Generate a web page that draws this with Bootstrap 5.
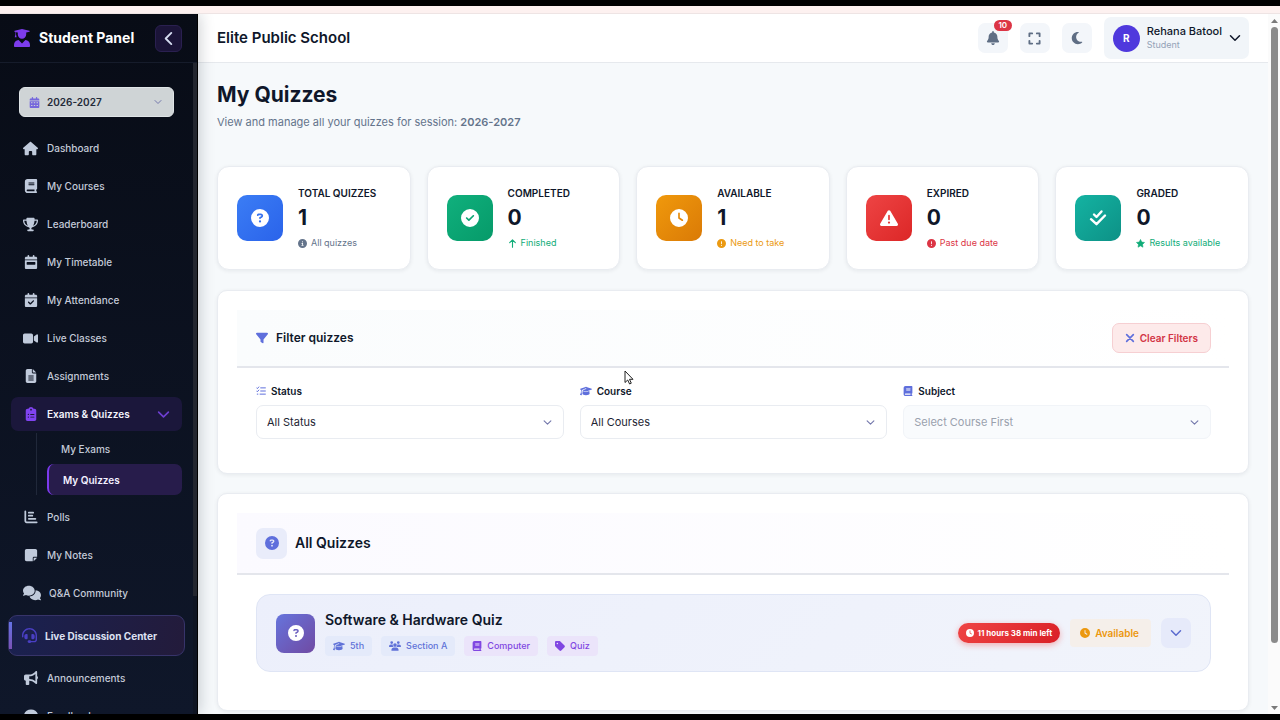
<!DOCTYPE html>
<html lang="en">
<head>
<meta charset="utf-8">
<meta name="viewport" content="width=device-width, initial-scale=1">
<title>Student Panel - My Quizzes</title>
<link href="https://cdn.jsdelivr.net/npm/bootstrap@5.3.0/dist/css/bootstrap.min.css" rel="stylesheet">
<style>
:root { --ink:#0f172a; --indigo:#5f6fdc; --edge:#e9ecf1; }
body { font-family:Inter,"Liberation Sans",sans-serif; font-size:11px; line-height:16px; color:var(--ink); background:#000; }
.ico { width:1em; height:1em; fill:currentColor; fill-rule:evenodd; flex:none; display:block; }
.fs-10 { font-size:10px; } .fs-12 { font-size:12px; } .fs-13 { font-size:13px; } .fs-14 { font-size:14px; } .fs-15 { font-size:15px; }

.frame-bar { height:6px; flex:none; }
.browser-strip { height:8px; flex:none; background:#fdf1f0; border-bottom:1px solid #eee4e4; }

.side-panel { width:198px; flex:none; font-size:10px; color:#c3cad8; background:linear-gradient(#080c16,#0f172a); border-right:1px solid #000; box-shadow:2px 0 14px rgba(15,23,42,.2); z-index:2; }
.brand-row { height:49px; flex:none; padding:0 15px 0 13px; border-bottom:1px solid #161c2b; font-size:14px; }
.brand-mark { color:#7d3cec; font-size:18px; }
.collapse-btn { width:27px; height:27px; border-radius:6px; background:#1b1438; border:1px solid #2a2050; color:#d5dcf0; }
.side-track { width:4px; flex:none; background:#0e1422; }
.side-thumb { height:533px; background:#23262f; }
.side-body { padding:24px 11px 0; }
.session-pick { height:30px; border-radius:6px; margin:0 8px; padding:0 9px; background:#cfd4d6; border:1px solid #dfe4e6; }
.session-pick label { color:#7568dc; font-size:11px; }
.session-pick select { font-size:10px; font-weight:600; line-height:16px; color:#232a39; padding:0 18px 0 7px; background-color:transparent; background-position:right 2px center; background-size:8px 8px; }
.side-list { margin-top:14px; }
.side-link { height:34px; margin-bottom:4px; padding:0 12px 0 11px; gap:8px; border-radius:7px; color:#c3cad8; font-weight:500; text-decoration:none; display:flex; align-items:center; }
.side-link .glyph { width:17px; display:flex; justify-content:center; font-size:14px; color:#c0cadb; }
.side-link .glyph-wide { width:19px; font-size:18px; }
.side-link.open { background:#1b173b; color:#f3f4fb; font-weight:600; }
.side-link.open .glyph { color:#8043f0; }
.open-caret { color:#6d3fd0; font-size:13px; }
.sub-list { margin:-2px 0 5px 25px; border-left:1px solid #20283a; padding-left:10px; }
.sub-list a { height:31px; display:flex; align-items:center; padding-left:14px; border-radius:7px; color:#c3cad8; font-weight:500; text-decoration:none; }
.sub-list a.current { color:#f3f0ff; font-weight:600; background:#271c4b; border-left:2px solid #7c3aed; }
.live-link { height:41px; margin:5px -3px 5px; padding:0 13px; gap:8px; border:1px solid #37346a; border-radius:9px; background:linear-gradient(100deg,#1a2150,#231b3b); color:#dde1f2; font-weight:700; text-decoration:none; display:flex; align-items:center; position:relative; }
.live-link::before { content:""; position:absolute; left:0; top:6px; bottom:6px; width:3px; background:linear-gradient(#6473e6,#7b52b5); }
.live-link .ico { color:#4a3fc4; font-size:15px; }

.page-area { background:#f6f9fb; }
.top-bar { height:49px; flex:none; background:#fff; border-bottom:1px solid #e6e9ed; padding:0 19px; }
.tool-set { gap:12px; }
.tool-btn { width:30px; height:30px; border:0; border-radius:7px; background:#f3f6fa; color:#5f6e84; position:relative; font-size:14px; }
.count-pill { position:absolute; top:-3px; left:16px; width:18px; height:11px; border-radius:6px; background:#dc3545; color:#fff; font-size:8px; line-height:11px; font-weight:600; }
.user-btn { height:42px; padding:0 8px 0 9px; gap:7px; border:0; border-radius:7px; background:#f1f5f9; color:var(--ink); line-height:14px; }
.user-dot { width:27px; height:27px; border-radius:50%; background:#4f39dd; color:#fff; font-size:10px; font-weight:700; }
.user-role { font-size:9px; color:#94a3b8; }

.content { padding:19px; }
.page-title { font-size:21px; line-height:26px; font-weight:700; }
.page-sub { color:#64748b; margin-top:6px; }
.panel { background:#fff; border:1px solid var(--edge); border-radius:10px; box-shadow:0 1px 4px rgba(15,23,42,.07); }
.stats { margin-top:36px; }
.stat { height:104px; padding:0 19px; gap:15px; border-radius:12px; }
.tile { width:46px; height:46px; border-radius:10px; color:#fff; font-size:18px; flex:none; }
.t-blue { background:linear-gradient(135deg,#3b7df5,#2a63ea); } .t-green { background:linear-gradient(135deg,#10b07d,#069a69); }
.t-amber { background:linear-gradient(135deg,#f0990c,#da7a06); } .t-red { background:linear-gradient(135deg,#ee4444,#dc2727); } .t-teal { background:linear-gradient(135deg,#14b3a2,#0d9186); }
.stat-name { font-size:10px; font-weight:600; line-height:14px; }
.stat-num { font-size:21px; font-weight:700; line-height:28px; margin:4px 0; }
.stat-note { font-size:9px; line-height:14px; gap:4px; white-space:nowrap; }
.stat-note .ico { font-size:9px; }
.c-green { color:#10ac78; } .c-amber { color:#eb9a12; } .c-red { color:#dc3545; } .c-grey { color:#64748b; } .c-indigo { color:var(--indigo); }

.block { margin-top:19px; padding:19px 19px 18px; }
.stats + .block { margin-top:20px; }
.block-head { padding:0 18px 0 19px; border-bottom:2px solid #e4e6ec; }
.head-filter { height:58px; background:linear-gradient(90deg,#fafcfd,#fff); }
.head-list { height:62px; background:linear-gradient(90deg,#fbfaff,#fff); }
.clear-btn { height:30px; padding:0 12px; gap:5px; border:1px solid #f6cfd2; border-radius:7px; background:#fdeaea; color:#d23445; font-size:10px; font-weight:600; }
.block-body { padding:15px 18px 16px 19px; }
.list-body { padding:19px 18px 20px 19px; }
.field-label { gap:5px; font-size:10px; font-weight:600; margin-bottom:6px; line-height:16px; }
.form-select { background-image:url("data:image/svg+xml,%3Csvg xmlns='http://www.w3.org/2000/svg' viewBox='0 0 16 16'%3E%3Cpath fill='none' stroke='%237478ac' stroke-width='2' stroke-linecap='round' stroke-linejoin='round' d='m2 5 6 6 6-6'/%3E%3C/svg%3E"); }
.picker { height:34px; font-size:11px; line-height:16px; padding:0 32px 0 10px; color:#1e2533; border:1px solid var(--edge); border-radius:7px; background-size:9px 9px; background-position:right 11px center; }
.picker:disabled { background-color:#f9fbfd; color:#9aa1ad; border-color:#f1f4f8; opacity:1; }

.head-icon { width:31px; height:31px; border-radius:7px; background:#e9ecfa; font-size:14px; }
.quiz-row { height:78px; padding:0 19px; gap:10px; border:1px solid #dfe5f5; border-radius:14px; background:linear-gradient(135deg,#eceffb,#f1f4fb); }
.quiz-tile { width:39px; height:39px; border-radius:8px; color:#fff; font-size:16px; background:linear-gradient(135deg,#6674dc,#704aa3); flex:none; }
.quiz-name { font-size:14px; font-weight:600; line-height:18px; margin-bottom:7px; }
.chips { gap:9px; }
.chip { height:20px; padding:0 8px; gap:5px; border-radius:4px; background:#e4eafa; color:#6072d8; font-size:9px; font-weight:500; }
.chip .ico { font-size:10px; }
.chip .ico-wide { font-size:12px; }
.chip-violet { background:#ebe4fa; color:#8147e2; }
.time-pill { height:20px; padding:0 8px; gap:3px; border-radius:10px; color:#fff; font-size:8px; font-weight:700; background:linear-gradient(135deg,#ef4444,#d91f26); box-shadow:0 2px 6px rgba(239,68,68,.4); }
.state-chip { height:28px; padding:0 12px 0 10px; gap:5px; border-radius:4px; background:#f5efea; color:#ec980f; font-size:10px; font-weight:600; }
.more-btn { width:30px; height:30px; border:0; border-radius:7px; background:#e6eafa; color:#5b6bcf; }

.scroll-rail { width:12px; flex:none; background:#fbfbfb; padding-top:5px; }
.scroll-thumb { width:7px; height:616px; border-radius:4px; background:#8b8b8b; margin-top:4px; }
.pointer { position:absolute; left:624px; top:370px; width:10px; height:15px; z-index:5; }
</style>
</head>
<body class="vh-100 overflow-hidden d-flex flex-column">

<svg class="d-none" xmlns="http://www.w3.org/2000/svg">
  <symbol id="i-house" viewBox="0 0 576 512"><path d="M575.8 255.5c0 18-15 32.1-32 32.1h-32l.7 160.2V472c0 22.1-17.9 40-40 40H392c-22.1 0-40-17.9-40-40V384c0-17.7-14.3-32-32-32H256c-17.7 0-32 14.3-32 32v88c0 22.1-17.9 40-40 40H104c-22.1 0-40-17.9-40-40V287.6H32c-18 0-32-14-32-32.1c0-9 3-17 10-24L266.4 8c7-7 15-8 22-8s15 2 21 7L564.8 231.5c8 7 12 15 11 24z"/></symbol>
  <symbol id="i-book" viewBox="0 0 448 512"><path d="M96 0C43 0 0 43 0 96V416c0 53 43 96 96 96H384h32c17.700 0 32-14.300 32-32s-14.300-32-32-32V384c17.700 0 32-14.300 32-32V32c0-17.700-14.300-32-32-32H384 96zm0 384H352v64H96c-17.700 0-32-14.300-32-32s14.300-32 32-32zm32-240c0-8.800 7.200-16 16-16H336c8.800 0 16 7.200 16 16s-7.200 16-16 16H144c-8.800 0-16-7.200-16-16zm16 48H336c8.800 0 16 7.200 16 16s-7.200 16-16 16H144c-8.800 0-16-7.200-16-16s7.200-16 16-16z"/></symbol>
  <symbol id="i-trophy" viewBox="0 0 576 512"><path d="M400 0H176c-26.500 0-48.100 21.800-47.100 48.200c.2 5.300 .4 10.600 .7 15.800H24C10.700 64 0 74.700 0 88c0 92.600 33.500 157 78.500 200.700c44.300 43.100 98.300 64.800 138.100 75.800c23.400 6.500 39.400 26 39.400 45.600c0 20.900-17 37.900-37.900 37.900H192c-17.700 0-32 14.300-32 32s14.300 32 32 32H384c17.700 0 32-14.300 32-32s-14.300-32-32-32H357.900C337 448 320 431 320 410.100c0-19.600 15.900-39.200 39.400-45.600c39.900-11 93.900-32.700 138.200-75.800C542.500 245 576 180.600 576 88c0-13.300-10.700-24-24-24H446.400c.3-5.200 .5-10.400 .7-15.800C448.100 21.800 426.500 0 400 0zM48.900 112h84.400c9.100 90.100 29.200 150.300 51.900 190.600c-24.900-11-50.800-26.500-73.200-48.300c-32-31.100-58-76-63-142.300zM464.100 254.300c-22.400 21.800-48.300 37.300-73.200 48.300c22.700-40.300 42.800-100.500 51.900-190.600h84.400c-5.100 66.300-31.100 111.200-63 142.300z"/></symbol>
  <symbol id="i-cal" viewBox="0 0 448 512"><path d="M128 0c17.700 0 32 14.300 32 32V64H288V32c0-17.700 14.300-32 32-32s32 14.300 32 32V64h48c26.500 0 48 21.500 48 48v48H0V112C0 85.500 21.500 64 48 64H96V32c0-17.700 14.300-32 32-32zM0 192H448V464c0 26.500-21.500 48-48 48H48c-26.500 0-48-21.500-48-48V192zM80 256c-8.800 0-16 7.200-16 16v64c0 8.800 7.200 16 16 16H368c8.800 0 16-7.200 16-16V272c0-8.800-7.200-16-16-16H80z"/></symbol>
  <symbol id="i-calcheck" viewBox="0 0 448 512"><path d="M128 0c17.700 0 32 14.300 32 32V64H288V32c0-17.700 14.300-32 32-32s32 14.300 32 32V64h48c26.500 0 48 21.500 48 48v48H0V112C0 85.500 21.500 64 48 64H96V32c0-17.700 14.300-32 32-32zM0 192H448V464c0 26.500-21.500 48-48 48H48c-26.500 0-48-21.500-48-48V192zM329 305c9.400-9.400 9.400-24.600 0-33.900s-24.600-9.400-33.900 0l-95 95-47-47c-9.400-9.400-24.600-9.400-33.900 0s-9.400 24.600 0 33.900l64 64c9.400 9.400 24.600 9.400 33.900 0L329 305z"/></symbol>
  <symbol id="i-calgrid" viewBox="0 0 448 512"><path d="M128 0c17.700 0 32 14.300 32 32V64H288V32c0-17.700 14.300-32 32-32s32 14.300 32 32V64h48c26.500 0 48 21.500 48 48v48H0V112C0 85.500 21.500 64 48 64H96V32c0-17.700 14.300-32 32-32zM0 192H448V464c0 26.500-21.500 48-48 48H48c-26.500 0-48-21.500-48-48V192zM64 240v48h64v-48zM192 240v48h64v-48zM320 240v48h64v-48zM64 368v48h64v-48zM192 368v48h64v-48zM320 368v48h64v-48z"/></symbol>
  <symbol id="i-video" viewBox="0 0 576 512"><path d="M0 128C0 92.700 28.700 64 64 64H320c35.300 0 64 28.700 64 64V384c0 35.300-28.700 64-64 64H64c-35.300 0-64-28.700-64-64V128zM559 99.800c10.400 5.600 17 16.400 17 28.200V384c0 11.800-6.500 22.600-17 28.200s-23 5-33-1.600l-96-64L416 337V175l14-9.500 96-64c9.800-6.500 22.400-7.200 33-1.700z"/></symbol>
  <symbol id="i-file" viewBox="0 0 384 512"><path d="M64 0C28.700 0 0 28.700 0 64V448c0 35.300 28.700 64 64 64H320c35.300 0 64-28.700 64-64V160H256c-17.700 0-32-14.300-32-32V0H64zM256 0V128H384L256 0zM96 240h192v32H96zM96 312h192v32H96zM96 384h192v32H96z"/></symbol>
  <symbol id="i-clip" viewBox="0 0 384 512"><path d="M192 0c-41.800 0-77.400 26.700-90.500 64H64C28.700 64 0 92.700 0 128V448c0 35.300 28.700 64 64 64H320c35.300 0 64-28.700 64-64V128c0-35.300-28.700-64-64-64H282.500C269.400 26.700 233.800 0 192 0zm0 64a32 32 0 1 1 0 64 32 32 0 1 1 0-64zM72 272a24 24 0 1 1 48 0 24 24 0 1 1 -48 0zm104-16H304c8.800 0 16 7.200 16 16s-7.200 16-16 16H176c-8.800 0-16-7.200-16-16s7.200-16 16-16zM72 368a24 24 0 1 1 48 0 24 24 0 1 1 -48 0zm88 0c0-8.800 7.200-16 16-16H304c8.800 0 16 7.200 16 16s-7.200 16-16 16H176c-8.800 0-16-7.200-16-16z"/></symbol>
  <symbol id="i-poll" viewBox="0 0 16 16"><path fill="none" stroke="currentColor" stroke-width="2" stroke-linecap="round" stroke-linejoin="round" d="M1.500 1.500v11a1.500 1.500 0 0 0 1.500 1.500h11.500M5.500 3h5M5.500 6.500h4M5.500 10h7.500"/></symbol>
  <symbol id="i-note" viewBox="0 0 448 512"><path d="M64 32C28.700 32 0 60.700 0 96V416c0 35.300 28.700 64 64 64H288V368c0-26.500 21.500-48 48-48H448V96c0-35.300-28.700-64-64-64H64zM448 352H336c-8.800 0-16 7.200-16 16V480z"/></symbol>
  <symbol id="i-chat" viewBox="0 0 640 512"><path d="M208 352c115 0 208-79 208-176S323 0 208 0S0 79 0 176c0 38.600 14.700 74.300 39.600 103.400c-3.500 9.400-8.700 17.700-14.200 24.700c-7 9-14 15-19 19C1 327-1.400 334.400 .8 341S9 352 16 352c21.800 0 43.800-5.600 62-12.500c9.200-3.500 17.800-7.400 25.200-11.400C134 343 170 352 208 352zM448 176c0 112.300-99 197-216.500 207C255.800 457.400 336.400 512 432 512c38.200 0 74-8.700 104.700-24c7.500 4 16 8 25.200 11.400c18.300 7 40.300 12.500 62 12.500c7 0 13-4.500 15.200-11s-.2-13.800-5.800-18c-5-4-12-10-19-19c-5.500-7-10.700-15.400-14.200-24.700c25-29 39.600-64.700 39.600-103.400c0-92.800-85-169-192.600-175.500c.4 5 .6 10.300 .6 15.500z"/></symbol>
  <symbol id="i-comment" viewBox="0 0 16 16"><path d="M8 0.500c4.400 0 8 3 8 6.800s-3.600 6.800-8 6.800c-1.200 0-2.300-.2-3.300-.6L1 15.500c-.5.200-.9-.3-.7-.7l1.300-3.300C.6 10.400 0 8.900 0 7.300 0 3.500 3.600.5 8 .5z"/></symbol>
  <symbol id="i-headset" viewBox="0 0 512 512"><path d="M256 48C141 48 48 141 48 256v40c0 13.300-10.700 24-24 24s-24-10.700-24-24V256C0 114.600 114.600 0 256 0S512 114.600 512 256V400c0 48.600-39.400 88-88 88H313.600c-8.300 14.300-23.800 24-41.600 24H240c-26.500 0-48-21.500-48-48s21.500-48 48-48h32c17.800 0 33.300 9.700 41.600 24H424c22 0 40-18 40-40V256c0-115-93-208-208-208zM144 208h16c17.700 0 32 14.300 32 32V352c0 17.700-14.300 32-32 32H144c-35.300 0-64-28.700-64-64V272c0-35.300 28.700-64 64-64zm224 0c35.300 0 64 28.700 64 64v48c0 35.300-28.700 64-64 64H352c-17.700 0-32-14.300-32-32V240c0-17.700 14.300-32 32-32h16z"/></symbol>
  <symbol id="i-horn" viewBox="0 0 512 512"><path d="M480 32c0-12.900-7.800-24.600-19.800-29.600s-25.700-2.200-34.900 6.900L381.700 53c-48 48-113.100 75-181 75H64c-35.300 0-64 28.700-64 64v96c0 35.300 28.700 64 64 64V480c0 17.700 14.300 32 32 32h64c17.700 0 32-14.300 32-32V352h8.700c67.900 0 133 27 181 75l43.600 43.600c9.200 9.200 22.900 11.900 34.900 6.900s19.800-16.600 19.800-29.600V300.400c18.600-8.800 32-32.500 32-60.400s-13.400-51.600-32-60.400V32zm-64 76.700V371.300C357.200 317.800 280.500 288 200.700 288H192V192h8.700c79.800 0 156.500-29.800 215.300-83.300z"/></symbol>
  <symbol id="i-cap" viewBox="0 0 640 512"><path d="M320 32c-8 0-16 1.400-23.700 4L15.800 137.400C6.300 141 0 150 0 160s6.300 19 15.800 22.600l58 21C57.300 229.300 48 260 48 292v28c0 28.400-10.800 57.700-22.300 80.800c-6.500 13-14 25.800-22.500 37.600C0 442.700-1 448.300 1 453.400s6 9 11 10.200l64 16c4.200 1 8.700 .3 12.400-2s6.300-6 7-10.400c8.600-42.800 4.300-81.200-2-108.700C90.300 344.300 86 330 80 316.500V292c0-30.200 10.200-58.700 28-81.500c13-15.500 29.600-28 49.200-35.700l157-61.700c8.200-3.200 17.500 .8 20.700 9s-.8 17.500-9 20.700l-157 61.700c-12.400 5-23.300 12.400-32.200 21.600l159.600 57.600c7.600 2.700 15.600 4 23.700 4s16-1.400 23.700-4L624.200 182.600c9.500-3.400 15.800-12.500 15.800-22.600s-6.300-19-15.800-22.600L343.700 36C336 33.400 328 32 320 32zM128 408c0 35.300 86 72 192 72s192-36.700 192-72L496.700 262.600 354.500 314c-11 4-22.800 6-34.500 6s-23.500-2-34.500-6L143.300 262.600 128 408z"/></symbol>
  <symbol id="i-grad" viewBox="0 0 16 18"><path d="M8 0 .6 1.800C.1 2 .1 2.600.6 2.700L1.500 3v2.200L.7 8.200h1.900L2 5.200V3.200l1.800.4v1.900a4.200 4.200 0 0 0 8.400 0V3.600l3.200-.9c.5-.1.500-.7 0-.9zM4.600 11C1.900 11.200 0 13.300 0 16v1.200c0 .5.300.8.800.8h14.400c.5 0 .8-.3.800-.8V16c0-2.700-1.900-4.800-4.600-5L8 14.500z"/></symbol>
  <symbol id="i-bell" viewBox="0 0 448 512"><path d="M224 0c-17.700 0-32 14.300-32 32V51.200C119 66 64 130.600 64 208v18.800c0 47-17.300 92.400-48.500 127.600l-7.400 8.300c-8.400 9.400-10.400 22.900-5.300 34.400S19.400 416 32 416H416c12.600 0 24-7.400 29.200-18.900s3.100-25-5.300-34.400l-7.400-8.300C401.300 319.200 384 273.900 384 226.800V208c0-77.400-55-142-128-156.800V32c0-17.700-14.300-32-32-32zm45.300 493.300c12-12 18.700-28.300 18.700-45.300H160c0 17 6.700 33.300 18.700 45.300s28.300 18.700 45.300 18.700s33.300-6.700 45.300-18.700z"/></symbol>
  <symbol id="i-expand" viewBox="0 0 14 14"><path fill="none" stroke="currentColor" stroke-width="2" stroke-linecap="round" stroke-linejoin="round" d="M1.500 4.500v-3h3M9.500 1.500h3v3M12.500 9.500v3h-3M4.500 12.500h-3v-3"/></symbol>
  <symbol id="i-moon" viewBox="0 0 384 512"><path d="M223.500 32C100 32 0 132.300 0 256S100 480 223.500 480c60.600 0 115.500-24.200 155.800-63.400c5-4.900 6.300-12.500 3.100-18.700s-10.100-9.700-17-8.500c-9.800 1.700-19.800 2.600-30.100 2.600c-96.900 0-175.500-78.800-175.500-176c0-65.800 36-123.100 89.300-153.300c6.100-3.500 9.200-10.500 7.700-17.300s-7.300-11.900-14.300-12.500c-6.300-.5-12.600-.8-19-.8z"/></symbol>
  <symbol id="i-filter" viewBox="0 0 512 512"><path d="M4 55C10.500 41 24.500 32 40 32H472c15.500 0 29.500 9 36 23s4.600 30.500-5.200 42.500L320 321V448c0 12-6.800 23.200-17.700 28.600s-23.800 4.300-33.500-3l-64-48c-8-6-12.800-15.500-12.800-25.600V321L9 97.300C-.7 85.400-2.800 68.800 4 55z"/></symbol>
  <symbol id="i-check" viewBox="0 0 512 512"><path d="M256 512A256 256 0 1 0 256 0a256 256 0 1 0 0 512zM369 209L241 337c-9.400 9.400-24.600 9.400-33.900 0l-64-64c-9.400-9.400-9.400-24.600 0-33.900s24.600-9.400 33.900 0l47 47L335 175c9.400-9.400 24.600-9.400 33.900 0s9.400 24.600 0 33.900z"/></symbol>
  <symbol id="i-ask" viewBox="0 0 512 512"><path d="M256 512A256 256 0 1 0 256 0a256 256 0 1 0 0 512zM169.800 165.300c7.900-22.300 29.100-37.300 52.800-37.300h58.300c34.900 0 63.100 28.300 63.100 63.100c0 22.600-12.100 43.500-31.700 54.800L280 264.400c-.2 13-10.900 23.600-24 23.600c-13.300 0-24-10.700-24-24V250.500c0-8.600 4.600-16.500 12.100-20.800l44.300-25.400c4.700-2.700 7.600-7.700 7.600-13.100c0-8.400-6.800-15.100-15.100-15.100H222.600c-3.400 0-6.400 2.100-7.500 5.300l-.4 1.200c-4.400 12.500-18.200 19-30.600 14.600s-19-18.200-14.600-30.600l.4-1.200zM224 352a32 32 0 1 1 64 0 32 32 0 1 1 -64 0z"/></symbol>
  <symbol id="i-info" viewBox="0 0 512 512"><path d="M256 512A256 256 0 1 0 256 0a256 256 0 1 0 0 512zM216 336h24V272H216c-13.300 0-24-10.700-24-24s10.700-24 24-24h48c13.300 0 24 10.700 24 24v88h8c13.300 0 24 10.700 24 24s-10.700 24-24 24H216c-13.300 0-24-10.700-24-24s10.700-24 24-24zm40-208a32 32 0 1 1 0 64 32 32 0 1 1 0-64z"/></symbol>
  <symbol id="i-clock" viewBox="0 0 512 512"><path d="M256 0a256 256 0 1 1 0 512A256 256 0 1 1 256 0zM232 120V256c0 8 4 15.500 10.700 20l96 64c11 7.400 25.900 4.400 33.300-6.700s4.400-25.900-6.700-33.300L280 243.200V120c0-13.300-10.700-24-24-24s-24 10.700-24 24z"/></symbol>
  <symbol id="i-bang" viewBox="0 0 512 512"><path d="M256 512A256 256 0 1 0 256 0a256 256 0 1 0 0 512zM256 128c-13.300 0-24 10.700-24 24V264c0 13.300 10.700 24 24 24s24-10.700 24-24V152c0-13.300-10.700-24-24-24zm32 224a32 32 0 1 0 -64 0 32 32 0 1 0 64 0z"/></symbol>
  <symbol id="i-warn" viewBox="0 0 512 512"><path d="M256 32c14.200 0 27.300 7.500 34.500 19.800l216 368c7.300 12.400 7.300 27.700 .2 40.100S486.300 480 472 480H40c-14.300 0-27.600-7.700-34.700-20.100s-7-27.800 .2-40.100l216-368C228.700 39.500 241.800 32 256 32zm0 128c-13.300 0-24 10.700-24 24V296c0 13.300 10.700 24 24 24s24-10.700 24-24V184c0-13.300-10.700-24-24-24zm32 224a32 32 0 1 0 -64 0 32 32 0 1 0 64 0z"/></symbol>
  <symbol id="i-double" viewBox="0 0 18 18"><path fill="none" stroke="currentColor" stroke-width="2.400" stroke-linecap="round" stroke-linejoin="round" d="M5 5.500 7.500 8l5-5.500M2 10.200l5.500 5 8.500-8.700"/></symbol>
  <symbol id="i-star" viewBox="0 0 16 16"><path stroke="currentColor" stroke-linejoin="round" d="m8 .8 2.200 4.600 5 .7-3.600 3.500.8 5L8 12.200l-4.400 2.400.8-5L.8 6.100l5-.7z"/></symbol>
  <symbol id="i-up" viewBox="0 0 14 16"><path fill="none" stroke="currentColor" stroke-width="2" stroke-linecap="round" stroke-linejoin="round" d="M7 14.500v-13M2 6.500l5-5 5 5"/></symbol>
  <symbol id="i-tasks" viewBox="0 0 16 16"><path fill="none" stroke="currentColor" stroke-width="1.600" stroke-linecap="round" stroke-linejoin="round" d="M1 3l1.200 1.200L4.500 1.500M1 8l1.200 1.200 2.300-2.700M7.500 3H15M7.500 8H15M6.500 13H15M2 13h1"/></symbol>
  <symbol id="i-users" viewBox="0 0 20 16"><path d="M4.500 0a2.300 2.300 0 1 1 0 4.600 2.300 2.300 0 0 1 0-4.600zM15.500 0a2.300 2.300 0 1 1 0 4.600 2.300 2.300 0 0 1 0-4.600zM10 3.500a3 3 0 1 1 0 6 3 3 0 0 1 0-6zM0 9c0-2 1.300-3.500 3.300-3.500H5c.5 0 .9.100 1.200.2-.2 1.500.3 2.900 1.400 3.900H.6C.2 9.600 0 9.400 0 9zM20 9c0-2-1.300-3.500-3.300-3.500H15c-.5 0-.9.100-1.200.2.200 1.500-.3 2.900-1.400 3.900h7c.4 0 .6-.2.600-.6zM4 15c0-2.500 1.700-4.300 4.200-4.300h3.600c2.500 0 4.200 1.800 4.200 4.300 0 .6-.3 1-.9 1H4.900c-.6 0-.9-.4-.9-1z"/></symbol>
  <symbol id="i-tag" viewBox="0 0 16 16"><path d="M0 2v5.200c0 .5.200 1 .6 1.400l6.600 6.600c.8.800 2 .8 2.800 0l5.200-5.200c.8-.8.800-2 0-2.800L8.600.6C8.200.2 7.700 0 7.200 0H2C.9 0 0 .9 0 2zm3.800.7a1.200 1.200 0 1 1 0 2.400 1.200 1.200 0 0 1 0-2.400z"/></symbol>
  <symbol id="i-down" viewBox="0 0 16 16"><path fill="none" stroke="currentColor" stroke-width="2" stroke-linecap="round" stroke-linejoin="round" d="m2 5 6 6 6-6"/></symbol>
  <symbol id="i-left" viewBox="0 0 16 16"><path fill="none" stroke="currentColor" stroke-width="2" stroke-linecap="round" stroke-linejoin="round" d="m11 2-6 6 6 6"/></symbol>
  <symbol id="i-x" viewBox="0 0 12 12"><path fill="none" stroke="currentColor" stroke-width="2" stroke-linecap="round" d="m2 2 8 8M10 2l-8 8"/></symbol>
</svg>

<div class="frame-bar"></div>
<div class="browser-strip"></div>

<div class="d-flex flex-grow-1 overflow-hidden">
  <aside class="side-panel d-flex flex-column">
    <div class="brand-row d-flex align-items-center">
      <svg class="ico brand-mark"><use href="#i-grad"/></svg>
      <span class="text-white fw-bold ms-2 flex-grow-1 text-nowrap">Student Panel</span>
      <button class="collapse-btn p-0 d-flex align-items-center justify-content-center" type="button" aria-label="Collapse menu"><svg class="ico fs-15"><use href="#i-left"/></svg></button>
    </div>
    <div class="d-flex flex-grow-1 overflow-hidden">
      <div class="side-body flex-grow-1">
        <div class="session-pick d-flex align-items-center">
          <label for="session" aria-label="Session"><svg class="ico"><use href="#i-calgrid"/></svg></label>
          <select id="session" class="form-select border-0 shadow-none"><option>2026-2027</option></select>
        </div>
        <nav class="side-list">
          <a class="side-link" href="#"><span class="glyph"><svg class="ico fs-15"><use href="#i-house"/></svg></span>Dashboard</a>
          <a class="side-link" href="#"><span class="glyph"><svg class="ico"><use href="#i-book"/></svg></span>My Courses</a>
          <a class="side-link" href="#"><span class="glyph"><svg class="ico fs-15"><use href="#i-trophy"/></svg></span>Leaderboard</a>
          <a class="side-link" href="#"><span class="glyph"><svg class="ico"><use href="#i-cal"/></svg></span>My Timetable</a>
          <a class="side-link" href="#"><span class="glyph"><svg class="ico"><use href="#i-calcheck"/></svg></span>My Attendance</a>
          <a class="side-link" href="#"><span class="glyph"><svg class="ico fs-15"><use href="#i-video"/></svg></span>Live Classes</a>
          <a class="side-link" href="#"><span class="glyph"><svg class="ico"><use href="#i-file"/></svg></span>Assignments</a>
          <a class="side-link open" href="#"><span class="glyph"><svg class="ico"><use href="#i-clip"/></svg></span>Exams &amp; Quizzes<svg class="ico ms-auto open-caret"><use href="#i-down"/></svg></a>
          <div class="sub-list">
            <a href="#">My Exams</a>
            <a class="current" href="#">My Quizzes</a>
          </div>
          <a class="side-link" href="#"><span class="glyph"><svg class="ico"><use href="#i-poll"/></svg></span>Polls</a>
          <a class="side-link" href="#"><span class="glyph"><svg class="ico"><use href="#i-note"/></svg></span>My Notes</a>
          <a class="side-link" href="#"><span class="glyph glyph-wide"><svg class="ico"><use href="#i-chat"/></svg></span>Q&amp;A Community</a>
          <a class="live-link" href="#"><svg class="ico"><use href="#i-headset"/></svg>Live Discussion Center</a>
          <a class="side-link" href="#"><span class="glyph"><svg class="ico"><use href="#i-horn"/></svg></span>Announcements</a>
          <a class="side-link" href="#"><span class="glyph"><svg class="ico"><use href="#i-comment"/></svg></span>Feedback</a>
        </nav>
      </div>
      <div class="side-track"><div class="side-thumb"></div></div>
    </div>
  </aside>

  <div class="page-area flex-grow-1 overflow-hidden d-flex flex-column">
    <header class="top-bar d-flex align-items-center">
      <span class="fs-15 fw-semibold flex-grow-1">Elite Public School</span>
      <div class="tool-set d-flex align-items-center">
        <button class="tool-btn d-flex align-items-center justify-content-center" type="button" aria-label="Notifications"><svg class="ico"><use href="#i-bell"/></svg><span class="count-pill">10</span></button>
        <button class="tool-btn d-flex align-items-center justify-content-center" type="button" aria-label="Full screen"><svg class="ico fs-13"><use href="#i-expand"/></svg></button>
        <button class="tool-btn d-flex align-items-center justify-content-center" type="button" aria-label="Dark mode"><svg class="ico"><use href="#i-moon"/></svg></button>
        <button class="user-btn d-flex align-items-center text-start" type="button">
          <span class="user-dot d-flex align-items-center justify-content-center">R</span>
          <span><span class="d-block fw-medium">Rehana Batool</span><span class="d-block user-role">Student</span></span>
          <svg class="ico fs-12"><use href="#i-down"/></svg>
        </button>
      </div>
    </header>

    <main class="content">
      <h1 class="page-title mb-0">My Quizzes</h1>
      <p class="page-sub mb-0">View and manage all your quizzes for session: <b class="fw-semibold">2026-2027</b></p>

      <div class="stats row row-cols-5 gx-3">
        <div class="col"><div class="panel stat d-flex align-items-center"><div class="tile t-blue d-flex align-items-center justify-content-center"><svg class="ico"><use href="#i-ask"/></svg></div><div><div class="stat-name">TOTAL QUIZZES</div><div class="stat-num">1</div><div class="stat-note c-grey d-flex align-items-center"><svg class="ico"><use href="#i-info"/></svg>All quizzes</div></div></div></div>
        <div class="col"><div class="panel stat d-flex align-items-center"><div class="tile t-green d-flex align-items-center justify-content-center"><svg class="ico"><use href="#i-check"/></svg></div><div><div class="stat-name">COMPLETED</div><div class="stat-num">0</div><div class="stat-note c-green d-flex align-items-center"><svg class="ico"><use href="#i-up"/></svg>Finished</div></div></div></div>
        <div class="col"><div class="panel stat d-flex align-items-center"><div class="tile t-amber d-flex align-items-center justify-content-center"><svg class="ico"><use href="#i-clock"/></svg></div><div><div class="stat-name">AVAILABLE</div><div class="stat-num">1</div><div class="stat-note c-amber d-flex align-items-center"><svg class="ico"><use href="#i-bang"/></svg>Need to take</div></div></div></div>
        <div class="col"><div class="panel stat d-flex align-items-center"><div class="tile t-red d-flex align-items-center justify-content-center"><svg class="ico"><use href="#i-warn"/></svg></div><div><div class="stat-name">EXPIRED</div><div class="stat-num">0</div><div class="stat-note c-red d-flex align-items-center"><svg class="ico"><use href="#i-bang"/></svg>Past due date</div></div></div></div>
        <div class="col"><div class="panel stat d-flex align-items-center"><div class="tile t-teal d-flex align-items-center justify-content-center"><svg class="ico"><use href="#i-double"/></svg></div><div><div class="stat-name">GRADED</div><div class="stat-num">0</div><div class="stat-note c-green d-flex align-items-center"><svg class="ico"><use href="#i-star"/></svg>Results available</div></div></div></div>
      </div>

      <section class="panel block">
        <div class="block-head head-filter d-flex align-items-center gap-2">
          <svg class="ico c-indigo fs-12"><use href="#i-filter"/></svg>
          <h2 class="fs-12 fw-semibold mb-0 flex-grow-1">Filter quizzes</h2>
          <button class="clear-btn d-flex align-items-center" type="button"><svg class="ico c-indigo fs-10"><use href="#i-x"/></svg>Clear Filters</button>
        </div>
        <div class="block-body">
          <div class="row gx-3">
            <div class="col-4"><label class="field-label d-flex align-items-center" for="status"><svg class="ico c-indigo fs-10"><use href="#i-tasks"/></svg>Status</label><select id="status" class="form-select picker"><option>All Status</option></select></div>
            <div class="col-4"><label class="field-label d-flex align-items-center" for="course"><svg class="ico c-indigo fs-12"><use href="#i-cap"/></svg>Course</label><select id="course" class="form-select picker"><option>All Courses</option></select></div>
            <div class="col-4"><label class="field-label d-flex align-items-center" for="subject"><svg class="ico c-indigo fs-10"><use href="#i-book"/></svg>Subject</label><select id="subject" class="form-select picker" disabled><option>Select Course First</option></select></div>
          </div>
        </div>
      </section>

      <section class="panel block">
        <div class="block-head head-list d-flex align-items-center">
          <span class="head-icon c-indigo d-flex align-items-center justify-content-center me-2"><svg class="ico"><use href="#i-ask"/></svg></span>
          <h2 class="fs-14 fw-semibold mb-0">All Quizzes</h2>
        </div>
        <div class="list-body">
          <article class="quiz-row d-flex align-items-center">
            <span class="quiz-tile d-flex align-items-center justify-content-center"><svg class="ico"><use href="#i-ask"/></svg></span>
            <div class="flex-grow-1">
              <h3 class="quiz-name">Software &amp; Hardware Quiz</h3>
              <div class="chips d-flex">
                <span class="chip d-flex align-items-center"><svg class="ico ico-wide"><use href="#i-cap"/></svg>5th</span>
                <span class="chip d-flex align-items-center"><svg class="ico ico-wide"><use href="#i-users"/></svg>Section A</span>
                <span class="chip chip-violet d-flex align-items-center"><svg class="ico"><use href="#i-book"/></svg>Computer</span>
                <span class="chip chip-violet d-flex align-items-center"><svg class="ico"><use href="#i-tag"/></svg>Quiz</span>
              </div>
            </div>
            <span class="time-pill d-flex align-items-center"><svg class="ico"><use href="#i-clock"/></svg>11 hours 38 min left</span>
            <span class="state-chip d-flex align-items-center"><svg class="ico"><use href="#i-clock"/></svg>Available</span>
            <button class="more-btn d-flex align-items-center justify-content-center p-0" type="button" aria-label="Show details"><svg class="ico fs-12"><use href="#i-down"/></svg></button>
          </article>
        </div>
      </section>
    </main>
  </div>

  <div class="scroll-rail d-flex flex-column align-items-center">
    <svg width="7" height="4" viewBox="0 0 7 4" fill="#7a7a7a"><path d="M0 4 3.500 0 7 4z"/></svg>
    <div class="scroll-thumb"></div>
    <svg class="mt-auto mb-1" width="7" height="4" viewBox="0 0 7 4" fill="#7a7a7a"><path d="M0 0h7L3.500 4z"/></svg>
  </div>
</div>
<div class="frame-bar"></div>

<svg class="pointer" viewBox="0 0 10 15"><path d="M1 1v11.500l2.700-2.500 1.900 4 1.700-.8-1.800-3.900H9z" fill="#fff" stroke="#222" stroke-width="1"/></svg>

<script src="https://cdn.jsdelivr.net/npm/bootstrap@5.3.0/dist/js/bootstrap.bundle.min.js"></script>
</body>
</html>
